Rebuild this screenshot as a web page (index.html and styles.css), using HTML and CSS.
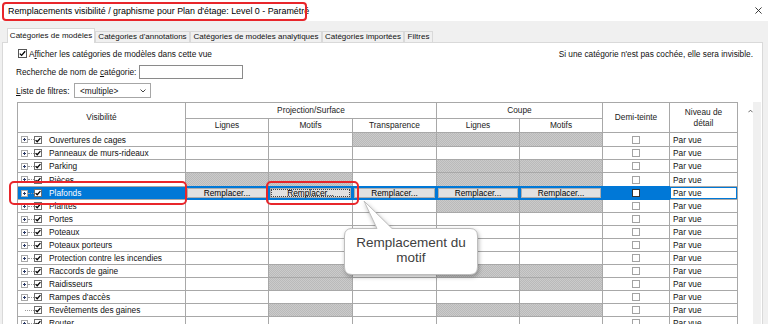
FILE: index.html
```html
<!DOCTYPE html>
<html lang="fr">
<head>
<meta charset="utf-8">
<title>Remplacements visibilité / graphisme</title>
<link rel="stylesheet" href="styles.css">
</head>
<body>
<div class="window">
  <div class="titlebar">
    <span class="title">Remplacements visibilité / graphisme pour Plan d'étage: Level 0 - Paramétré</span>
    <svg class="close" viewBox="0 0 8 8"><path d="M0.5 0.5 7.5 7.5 M7.5 0.5 0.5 7.5"/></svg>
  </div>
  <div class="dialog">
    <div class="tabs">
      <div class="tab active t1">Catégories de modèles</div>
      <div class="tab t2">Catégories d'annotations</div>
      <div class="tab t3">Catégories de modèles analytiques</div>
      <div class="tab t4">Catégories importées</div>
      <div class="tab t5">Filtres</div>
    </div>
    <div class="panel">
      <div class="toprow">
        <div class="showcat">
          <svg class="ck big" viewBox="0 0 9 9"><rect x="0.5" y="0.5" width="8" height="8"/><path d="M1.8 4.6 3.6 6.4 7.2 2.3"/></svg>
          <span>A<u>f</u>ficher les catégories de modèles dans cette vue</span>
        </div>
        <span class="hint">Si une catégorie n'est pas cochée, elle sera invisible.</span>
      </div>
      <div class="field">
        <span class="flabel search-label">Recherche de nom de <u>c</u>atégorie:</span>
        <span class="input"></span>
      </div>
      <div class="field field2">
        <span class="flabel filter-label"><u>L</u>iste de filtres:</span>
        <span class="select"><span>&lt;multiple&gt;</span><svg class="chev" viewBox="0 0 6 4"><path d="M0.5 0.5 3 3 5.5 0.5"/></svg></span>
      </div>
      <div class="gridwrap">
        <div class="grid">
          <div class="h hv">Visibilité</div>
          <div class="h hs3">Projection/Surface</div>
          <div class="h hs2">Coupe</div>
          <div class="h hv">Demi-teinte</div>
          <div class="h hv">Niveau de<br>détail</div>
          <div class="h">Lignes</div>
          <div class="h">Motifs</div>
          <div class="h">Transparence</div>
          <div class="h">Lignes</div>
          <div class="h">Motifs</div>

          <div class="vis"><span class="exp"></span><span class="dots"></span><svg class="ck" viewBox="0 0 8 8"><rect x="0.5" y="0.5" width="7" height="7"/><path d="M1.6 4.1 3.2 5.7 6.4 2.1"/></svg><span class="lbl">Ouvertures de cages</span></div>
          <div></div><div></div><div class="g"></div><div class="g"></div><div class="g"></div>
          <div class="dm"><span class="box"></span></div><div class="nv">Par vue</div>

          <div class="vis"><span class="exp"></span><span class="dots"></span><svg class="ck" viewBox="0 0 8 8"><rect x="0.5" y="0.5" width="7" height="7"/><path d="M1.6 4.1 3.2 5.7 6.4 2.1"/></svg><span class="lbl">Panneaux de murs-rideaux</span></div>
          <div></div><div></div><div></div><div></div><div></div>
          <div class="dm"><span class="box"></span></div><div class="nv">Par vue</div>

          <div class="vis"><span class="exp"></span><span class="dots"></span><svg class="ck" viewBox="0 0 8 8"><rect x="0.5" y="0.5" width="7" height="7"/><path d="M1.6 4.1 3.2 5.7 6.4 2.1"/></svg><span class="lbl">Parking</span></div>
          <div></div><div></div><div></div><div class="g"></div><div class="g"></div>
          <div class="dm"><span class="box"></span></div><div class="nv">Par vue</div>

          <div class="vis"><span class="exp"></span><span class="dots"></span><svg class="ck" viewBox="0 0 8 8"><rect x="0.5" y="0.5" width="7" height="7"/><path d="M1.6 4.1 3.2 5.7 6.4 2.1"/></svg><span class="lbl">Pièces</span></div>
          <div class="g"></div><div class="g"></div><div></div><div class="g"></div><div class="g"></div>
          <div class="dm"><span class="box"></span></div><div class="nv">Par vue</div>

          <div class="vis sel"><span class="exp"></span><span class="dots"></span><svg class="ck" viewBox="0 0 8 8"><rect x="0.5" y="0.5" width="7" height="7"/><path d="M1.6 4.1 3.2 5.7 6.4 2.1"/></svg><span class="lbl">Plafonds</span></div>
          <div class="bc"><span class="btn">Remplacer...</span></div>
          <div class="bc"><span class="btn focus"><span>Remplacer...</span></span></div>
          <div class="bc"><span class="btn">Remplacer...</span></div>
          <div class="bc"><span class="btn">Remplacer...</span></div>
          <div class="bc"><span class="btn">Remplacer...</span></div>
          <div class="dm sel"><span class="box"></span></div><div class="nv selnv">Par vue</div>

          <div class="vis"><span class="exp"></span><span class="dots"></span><svg class="ck" viewBox="0 0 8 8"><rect x="0.5" y="0.5" width="7" height="7"/><path d="M1.6 4.1 3.2 5.7 6.4 2.1"/></svg><span class="lbl">Plantes</span></div>
          <div></div><div></div><div></div><div class="g"></div><div class="g"></div>
          <div class="dm"><span class="box"></span></div><div class="nv">Par vue</div>

          <div class="vis"><span class="exp"></span><span class="dots"></span><svg class="ck" viewBox="0 0 8 8"><rect x="0.5" y="0.5" width="7" height="7"/><path d="M1.6 4.1 3.2 5.7 6.4 2.1"/></svg><span class="lbl">Portes</span></div>
          <div></div><div></div><div></div><div></div><div></div>
          <div class="dm"><span class="box"></span></div><div class="nv">Par vue</div>

          <div class="vis"><span class="exp"></span><span class="dots"></span><svg class="ck" viewBox="0 0 8 8"><rect x="0.5" y="0.5" width="7" height="7"/><path d="M1.6 4.1 3.2 5.7 6.4 2.1"/></svg><span class="lbl">Poteaux</span></div>
          <div></div><div></div><div></div><div></div><div></div>
          <div class="dm"><span class="box"></span></div><div class="nv">Par vue</div>

          <div class="vis"><span class="exp"></span><span class="dots"></span><svg class="ck" viewBox="0 0 8 8"><rect x="0.5" y="0.5" width="7" height="7"/><path d="M1.6 4.1 3.2 5.7 6.4 2.1"/></svg><span class="lbl">Poteaux porteurs</span></div>
          <div></div><div></div><div></div><div></div><div></div>
          <div class="dm"><span class="box"></span></div><div class="nv">Par vue</div>

          <div class="vis"><span class="exp"></span><span class="dots"></span><svg class="ck" viewBox="0 0 8 8"><rect x="0.5" y="0.5" width="7" height="7"/><path d="M1.6 4.1 3.2 5.7 6.4 2.1"/></svg><span class="lbl">Protection contre les incendies</span></div>
          <div></div><div></div><div></div><div></div><div></div>
          <div class="dm"><span class="box"></span></div><div class="nv">Par vue</div>

          <div class="vis"><span class="exp"></span><span class="dots"></span><svg class="ck" viewBox="0 0 8 8"><rect x="0.5" y="0.5" width="7" height="7"/><path d="M1.6 4.1 3.2 5.7 6.4 2.1"/></svg><span class="lbl">Raccords de gaine</span></div>
          <div></div><div class="g"></div><div></div><div class="g"></div><div class="g"></div>
          <div class="dm"><span class="box"></span></div><div class="nv">Par vue</div>

          <div class="vis"><span class="exp"></span><span class="dots"></span><svg class="ck" viewBox="0 0 8 8"><rect x="0.5" y="0.5" width="7" height="7"/><path d="M1.6 4.1 3.2 5.7 6.4 2.1"/></svg><span class="lbl">Raidisseurs</span></div>
          <div></div><div class="g"></div><div></div><div></div><div class="g"></div>
          <div class="dm"><span class="box"></span></div><div class="nv">Par vue</div>

          <div class="vis"><span class="exp"></span><span class="dots"></span><svg class="ck" viewBox="0 0 8 8"><rect x="0.5" y="0.5" width="7" height="7"/><path d="M1.6 4.1 3.2 5.7 6.4 2.1"/></svg><span class="lbl">Rampes d'accès</span></div>
          <div></div><div></div><div></div><div></div><div></div>
          <div class="dm"><span class="box"></span></div><div class="nv">Par vue</div>

          <div class="vis"><span class="exp none"></span><span class="dots long"></span><svg class="ck" viewBox="0 0 8 8"><rect x="0.5" y="0.5" width="7" height="7"/><path d="M1.6 4.1 3.2 5.7 6.4 2.1"/></svg><span class="lbl">Revêtements des gaines</span></div>
          <div></div><div class="g"></div><div></div><div class="g"></div><div class="g"></div>
          <div class="dm"><span class="box"></span></div><div class="nv">Par vue</div>

          <div class="vis"><span class="exp"></span><span class="dots"></span><svg class="ck" viewBox="0 0 8 8"><rect x="0.5" y="0.5" width="7" height="7"/><path d="M1.6 4.1 3.2 5.7 6.4 2.1"/></svg><span class="lbl">Router</span></div>
          <div></div><div></div><div></div><div></div><div></div>
          <div class="dm"><span class="box"></span></div><div class="nv">Par vue</div>
        </div>
        <div class="scrollbar"><svg class="up" viewBox="0 0 6 4"><path d="M0.5 3.5 3 1 5.5 3.5"/></svg></div>
        <div class="strip"></div>
      </div>
    </div>
  </div>

  <div class="ann ann-title"></div>
  <div class="ann ann-row"></div>
  <div class="ann ann-btn"></div>

  <div class="callout">
    <svg class="bubble" viewBox="0 0 134 47"><path d="M8 0.5 L33 0.5 L20 -27 L48 0.5 L126 0.5 Q133.5 0.5 133.5 8 L133.5 39 Q133.5 46.5 126 46.5 L8 46.5 Q0.5 46.5 0.5 39 L0.5 8 Q0.5 0.5 8 0.5 Z"/></svg>
    <div class="callout-text">Remplacement du<br>motif</div>
  </div>
</div>
</body>
</html>
```

FILE: styles.css
```css
* { box-sizing: border-box; }

html, body { margin: 0; padding: 0; }

body {
  width: 768px;
  height: 324px;
  overflow: hidden;
  background: #f0f0f0;
  font-family: "Liberation Sans", Arial, sans-serif;
  font-size: 8.3px;
  color: #111;
}

.window {
  position: relative;
  width: 768px;
  height: 324px;
  overflow: hidden;
}

/* Title bar */
.titlebar {
  height: 21px;
  background: #fff;
  display: flex;
  align-items: center;
  justify-content: space-between;
  padding: 0 6px 0 8px;
}
.title { font-size: 8.9px; color: #000; }
.close { width: 7px; height: 7px; }
.close path { stroke: #222; stroke-width: 1; fill: none; }

/* Dialog */
.dialog { padding: 7px 5px 0 2px; }

.tabs {
  display: flex;
  align-items: flex-end;
  height: 14px;
  margin-left: 5px;
}
.tab {
  height: 11px;
  line-height: 10px;
  font-size: 8px;
  text-align: center;
  white-space: nowrap;
  border: 1px solid #d9d9d9;
  border-bottom: 0;
  background: #f0f0f0;
}
.tab.active {
  height: 15px;
  line-height: 14px;
  margin-bottom: -1px;
  background: #fff;
  position: relative;
  z-index: 1;
}
.t1 { width: 88px; }
.t2 { width: 95px; }
.t3 { width: 132px; }
.t4 { width: 82px; }
.t5 { width: 29px; }

.panel {
  background: #fff;
  border: 1px solid #d9d9d9;
  height: 290px;
  padding-left: 13px;
  overflow: hidden;
}

.toprow {
  display: flex;
  justify-content: space-between;
  align-items: center;
  margin-top: 6px;
  height: 9px;
  padding-right: 9px;
}
.showcat {
  display: flex;
  align-items: center;
  margin-left: 2px;
  gap: 2px;
}
.ck { width: 8px; height: 8px; flex: none; }
.ck.big { width: 9px; height: 9px; }
.ck rect { fill: #fff; stroke: #6e6e6e; stroke-width: 1; }
.ck path { fill: none; stroke: #000; stroke-width: 1.3; }
.ck.big rect { stroke: #555; }

.field {
  display: flex;
  align-items: center;
  margin-top: 6px;
  height: 15px;
}
.field2 { margin-top: 4px; }
.flabel { flex: none; }
.search-label { width: 123px; }
.filter-label { width: 58px; }
.input {
  width: 104px;
  height: 14px;
  border: 1px solid #8a8a8a;
  background: #fff;
}
.select {
  width: 77px;
  height: 15px;
  border: 1px solid #a6a6a6;
  display: flex;
  align-items: center;
  justify-content: space-between;
  padding: 0 4px 0 5px;
}
.chev, .up { width: 6px; height: 4px; }
.chev path, .up path { fill: none; stroke: #444; stroke-width: 1; }

/* Grid table */
.gridwrap {
  display: flex;
  margin-top: 4px;
  margin-left: 1px;
}
.grid {
  display: grid;
  grid-template-columns: 167px 82px 83px 83px 82px 82px 66px 67px;
  grid-template-rows: 15px 13px 13px 12px 12px 13px 12px 12px 12px 12px 12px 12px 12px 12px 12px 12px 12px;
  gap: 1px;
  background: #a8a8a8;
  border: 1px solid #a8a8a8;
  flex: none;
}
.grid > div {
  background: #fff;
  display: flex;
  align-items: center;
  white-space: nowrap;
  overflow: visible;
}
.grid > .h {
  justify-content: center;
  text-align: center;
  color: #222;
  line-height: 11px;
}
.grid > .hv { grid-row: span 2; }
.grid > .hs3 { grid-column: span 3; }
.grid > .hs2 { grid-column: span 2; }

.grid > .g {
  background: repeating-conic-gradient(#bababa 0 25%, #cbcbcb 0 50%) 0 0 / 2px 2px;
}

.vis { padding-left: 3px; }
.exp {
  width: 7px;
  height: 7px;
  flex: none;
  border: 1px solid #a8a8a8;
  background:
    linear-gradient(#2b3a67, #2b3a67) center / 3px 1px no-repeat,
    linear-gradient(#2b3a67, #2b3a67) center / 1px 3px no-repeat,
    #fff;
}
.exp.none { visibility: hidden; }
.dots {
  width: 6px;
  height: 1px;
  flex: none;
  border-top: 1px dotted #9a9a9a;
}
.dots.long { width: 9px; margin-left: -3px; }
.lbl { margin-left: 7px; }

.grid > .vis.sel { background: #0078d7; color: #fff; }

.grid > .bc {
  background: #0078d7;
  outline: 1px solid #0078d7;
  padding: 1px;
  position: relative;
}
.btn {
  flex: 1;
  height: 100%;
  background: #e1e1e1;
  border: 1px solid #adadad;
  display: flex;
  align-items: center;
  justify-content: center;
  color: #000;
  line-height: 1;
}
.btn.focus { padding: 0; }
.btn.focus span {
  flex: 1;
  height: 100%;
  display: flex;
  align-items: center;
  justify-content: center;
  border: 1px dotted #444;
}

.grid > .dm { justify-content: center; }
.box {
  width: 8px;
  height: 8px;
  border: 1px solid #a3a3a3;
  background: #fff;
}
.grid > .dm.sel { background: #0078d7; outline: 1px solid #0078d7; }
.dm.sel .box { border-color: #333; }

.grid > .nv { padding-left: 3px; color: #111; }
.grid > .selnv { outline: 1px solid #0078d7; outline-offset: -1px; }

.scrollbar {
  width: 15px;
  background: #fff;
  padding: 7px 0 0 10px;
  flex: none;
}
.scrollbar .up { display: block; width: 5px; height: 4px; }
.strip {
  width: 8px;
  background: #f0f0f0;
  flex: none;
}

/* Annotations overlay */
.ann {
  position: absolute;
  border: 2px solid #e8262b;
  border-radius: 4px;
}
.ann-title { left: 2px; top: 2px; width: 305px; height: 19px; }
.ann-row { left: 9px; top: 181px; width: 178px; height: 24px; border-radius: 5px; }
.ann-btn { left: 266px; top: 181px; width: 93px; height: 24px; border-radius: 5px; }

.callout {
  position: absolute;
  left: 344px;
  top: 228px;
  width: 134px;
  height: 47px;
}
.bubble {
  position: absolute;
  left: 0;
  top: 0;
  width: 134px;
  height: 47px;
  overflow: visible;
  filter: drop-shadow(1px 2px 2px rgba(0, 0, 0, 0.3));
}
.bubble path { fill: #fff; stroke: #bdbdbd; stroke-width: 1; }
.callout-text {
  position: relative;
  padding-top: 7px;
  text-align: center;
  font-family: "Liberation Sans", Arial, sans-serif;
  font-size: 13.5px;
  line-height: 15px;
  color: #404040;
}
```
